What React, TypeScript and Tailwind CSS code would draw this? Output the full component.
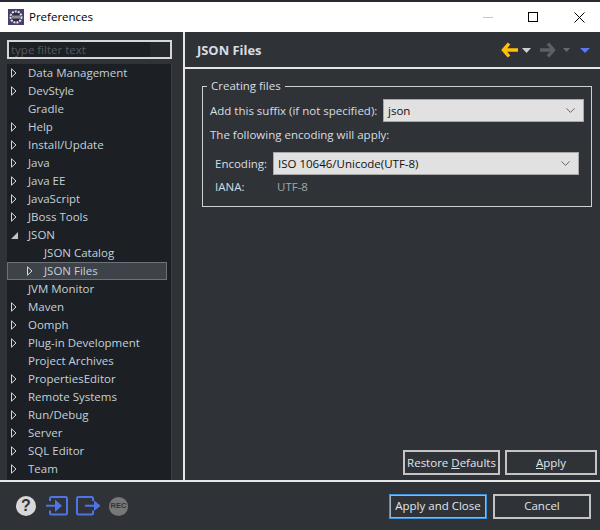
import { ChevronDown } from "lucide-react";

const treeItems = [
  { label: "Data Management", arrow: true },
  { label: "DevStyle", arrow: true },
  { label: "Gradle", arrow: false },
  { label: "Help", arrow: true },
  { label: "Install/Update", arrow: true },
  { label: "Java", arrow: true },
  { label: "Java EE", arrow: true },
  { label: "JavaScript", arrow: true },
  { label: "JBoss Tools", arrow: true },
  { label: "JSON", open: true },
  { label: "JSON Catalog", child: true },
  { label: "JSON Files", child: true, arrow: true, selected: true },
  { label: "JVM Monitor", arrow: false },
  { label: "Maven", arrow: true },
  { label: "Oomph", arrow: true },
  { label: "Plug-in Development", arrow: true },
  { label: "Project Archives", arrow: false },
  { label: "PropertiesEditor", arrow: true },
  { label: "Remote Systems", arrow: true },
  { label: "Run/Debug", arrow: true },
  { label: "Server", arrow: true },
  { label: "SQL Editor", arrow: true },
  { label: "Team", arrow: true },
];

function Arrow() {
  return (
    <svg width="6" height="10" viewBox="0 0 6 10" className="shrink-0">
      <path d="M0.5 0.8 L5 5 L0.5 9.2 Z" fill="none" stroke="#d8d8d8" strokeWidth="1" />
    </svg>
  );
}

function TreeRow({ item }: { item: (typeof treeItems)[number] }) {
  return (
    <div
      className={`flex h-[18px] items-center ${item.selected ? "w-[160px] border border-[#6b7278] bg-[#3d4349]" : ""}`}
    >
      <div className={`flex shrink-0 items-center ${item.child ? "w-[37px] pl-[20px]" : "w-[21px] pl-[4px]"} ${item.selected ? "-ml-px" : ""}`}>
        {item.arrow && <Arrow />}
        {item.open && (
          <svg width="7" height="7" viewBox="0 0 7 7">
            <path d="M7 0 V7 H0 Z" fill="#c4c4c4" />
          </svg>
        )}
      </div>
      <span className="whitespace-nowrap text-[#c5d0d8]">{item.label}</span>
    </div>
  );
}

function Combo({ value, width }: { value: string; width: string }) {
  return (
    <div className={`flex h-[23px] items-center justify-between border border-[#a8a8a8] bg-[#e1e1e1] pl-[4px] pr-[5px] text-[#101010] ${width}`}>
      <span>{value}</span>
      <ChevronDown size={15} strokeWidth={1.25} className="text-[#444444]" />
    </div>
  );
}

function Btn({ children, className }: { children: React.ReactNode; className: string }) {
  return (
    <div className={`flex h-[25px] items-center justify-center border-2 border-[#c4c4c4] text-[#e0e6ea] ${className}`}>
      {children}
    </div>
  );
}

export default function App() {
  return (
    <div className="flex h-[530px] w-[600px] flex-col overflow-hidden bg-[#2f3338] font-['Open_Sans','Liberation_Sans',sans-serif] text-[11.5px] text-[#d8dde1]">
      <div className="h-[2px] bg-[#2a2a33]" />
      {/* title bar */}
      <div className="flex h-[30px] items-center bg-white text-black">
        <svg width="16" height="16" viewBox="0 0 16 16" className="ml-[8px]">
          <rect width="16" height="16" fill="#4a3d72" />
          <circle cx="8" cy="8" r="5.5" fill="#2b2b40" stroke="#e4e4e4" strokeWidth="2" strokeDasharray="2 1" />
          <path d="M3.5 6.5 H12.5 V9.5 H3.5 Z" fill="#8c8c9c" />
        </svg>
        <span className="ml-[5px] flex-1">Preferences</span>
        <div className="mr-[35px] h-px w-[10px] bg-[#c8c8c8]" />
        <div className="mr-[36px] h-[10px] w-[10px] border border-black" />
        <svg width="11" height="11" viewBox="0 0 11 11" className="mr-[15px]">
          <path d="M0.5 0.5 L10.5 10.5 M10.5 0.5 L0.5 10.5" stroke="#000000" strokeWidth="1" />
        </svg>
      </div>

      <div className="flex min-h-0 flex-1">
        {/* left tree */}
        <div className="flex w-[185px] shrink-0 flex-col border-r-2 border-[#e6e6e6] pl-[7px] pr-[11px] pt-[8px]">
          <div className="flex h-[19px] border-2 border-[#d6d6d6] bg-[#24282c]">
            <div className="flex w-[141px] items-center bg-[#1c2024] pl-[2px] text-[#555a5e]">type filter text</div>
          </div>
          <div className="mt-[5px] flex-1 overflow-hidden border-r border-[#3b4045] bg-[#1c2024]">
            {treeItems.map((item) => (
              <TreeRow key={item.label} item={item} />
            ))}
          </div>
        </div>

        {/* right page */}
        <div className="flex min-w-0 flex-1 flex-col">
          <div className="flex h-[37px] shrink-0 items-center justify-between border-b-2 border-[#e6e6e6] pl-[12px] pr-[10px] pt-[1px]">
            <span className="mt-[1px] text-[12.9px] font-bold text-[#d8dde1]">JSON Files</span>
            <div className="flex items-center">
              <svg width="17" height="16" viewBox="0 0 17 16">
                <path d="M8 1.5 L2.5 8 L8 14.5 M3 8 H17" fill="none" stroke="#ffc107" strokeWidth="3.4" />
              </svg>
              <svg width="9" height="5" viewBox="0 0 9 5" className="ml-[4px]">
                <path d="M0 0 H9 L4.5 5 Z" fill="#d0d0d0" />
              </svg>
              <svg width="16" height="16" viewBox="0 0 16 16" className="ml-[9px]">
                <path d="M8 1.5 L13.5 8 L8 14.5 M0 8 H13" fill="none" stroke="#5c6065" strokeWidth="3.4" />
              </svg>
              <svg width="7" height="4" viewBox="0 0 7 4" className="ml-[7px]">
                <path d="M0 0 H7 L3.5 4 Z" fill="#6a6a6a" />
              </svg>
              <svg width="10" height="5" viewBox="0 0 10 5" className="ml-[10px]">
                <path d="M0 0 H10 L5 5 Z" fill="#5b78f5" />
              </svg>
            </div>
          </div>

          <div className="flex flex-1 flex-col pl-[17px] pr-[3px] pt-[9px]">
            <fieldset className="mr-[5px] h-[129px] border border-[#d0d0d0] px-[7px] pt-[5px]">
              <legend className="-ml-[3px] px-[4px] leading-[16px]">Creating files</legend>
              <div className="flex items-center">
                <span className="w-[173px] whitespace-nowrap">Add this suffix (if not specified):</span>
                <Combo value="json" width="w-[201px]" />
              </div>
              <div className="mt-[5px] leading-[16px]">The following encoding will apply:</div>
              <div className="ml-[5px] mt-[9px] flex items-center">
                <span className="w-[58px]">Encoding:</span>
                <Combo value="ISO 10646/Unicode(UTF-8)" width="w-[306px]" />
              </div>
              <div className="ml-[5px] mt-[4px] flex leading-[16px]">
                <span className="w-[62px]">IANA:</span>
                <span className="text-[#a0a5a9]">UTF-8</span>
              </div>
            </fieldset>

            <div className="mb-[5px] mt-auto flex justify-end gap-[5px]">
              <Btn className="w-[97px]">
                <span>Restore <span className="underline">D</span>efaults</span>
              </Btn>
              <Btn className="w-[92px]">
                <span><span className="underline">A</span>pply</span>
              </Btn>
            </div>
          </div>
        </div>
      </div>

      {/* footer */}
      <div className="flex h-[50px] shrink-0 items-center border-t-2 border-[#e6e6e6] pl-[16px] pr-[9px]">
        <div className="flex h-[20px] w-[20px] items-center justify-center rounded-full bg-[#d8d8d8] font-['Liberation_Sans',sans-serif] text-[16px] font-bold text-[#2f3338]">?</div>
        <svg width="22" height="20" viewBox="0 0 22 20" className="ml-[10px]">
          <path d="M4 5 V2.5 Q4 1 5.5 1 H19.5 Q21 1 21 2.5 V17 Q21 18.5 19.5 18.5 H5.5 Q4 18.5 4 17 V14.5" fill="none" stroke="#4f74e3" strokeWidth="2" />
          <path d="M0 9.8 H10 M10 5.8 L14.5 9.8 L10 13.8 Z" fill="#4f74e3" stroke="#4f74e3" strokeWidth="2" />
        </svg>
        <svg width="24" height="20" viewBox="0 0 24 20" className="ml-[8px]">
          <path d="M17 5 V2.5 Q17 1 15.5 1 H2.5 Q1 1 1 2.5 V17 Q1 18.5 2.5 18.5 H15.5 Q17 18.5 17 17 V14.5" fill="none" stroke="#4f74e3" strokeWidth="2" />
          <path d="M9 9.8 H19 M19 6.5 L23 9.8 L19 13 Z" fill="#4f74e3" stroke="#4f74e3" strokeWidth="2" />
        </svg>
        <div className="ml-[9px] flex h-[19px] w-[19px] items-center justify-center rounded-full bg-[#777777] font-['Liberation_Sans',sans-serif] text-[7.5px] font-bold text-[#333333]">REC</div>
        <div className="ml-auto flex gap-[6px]">
          <div className="flex h-[25px] w-[98px] items-center justify-center border border-[#3f94dc] text-[#e0e6ea] shadow-[inset_0_0_0_1px_#9fb4c4]">Apply and Close</div>
          <Btn className="w-[98px]">Cancel</Btn>
        </div>
      </div>
    </div>
  );
}
